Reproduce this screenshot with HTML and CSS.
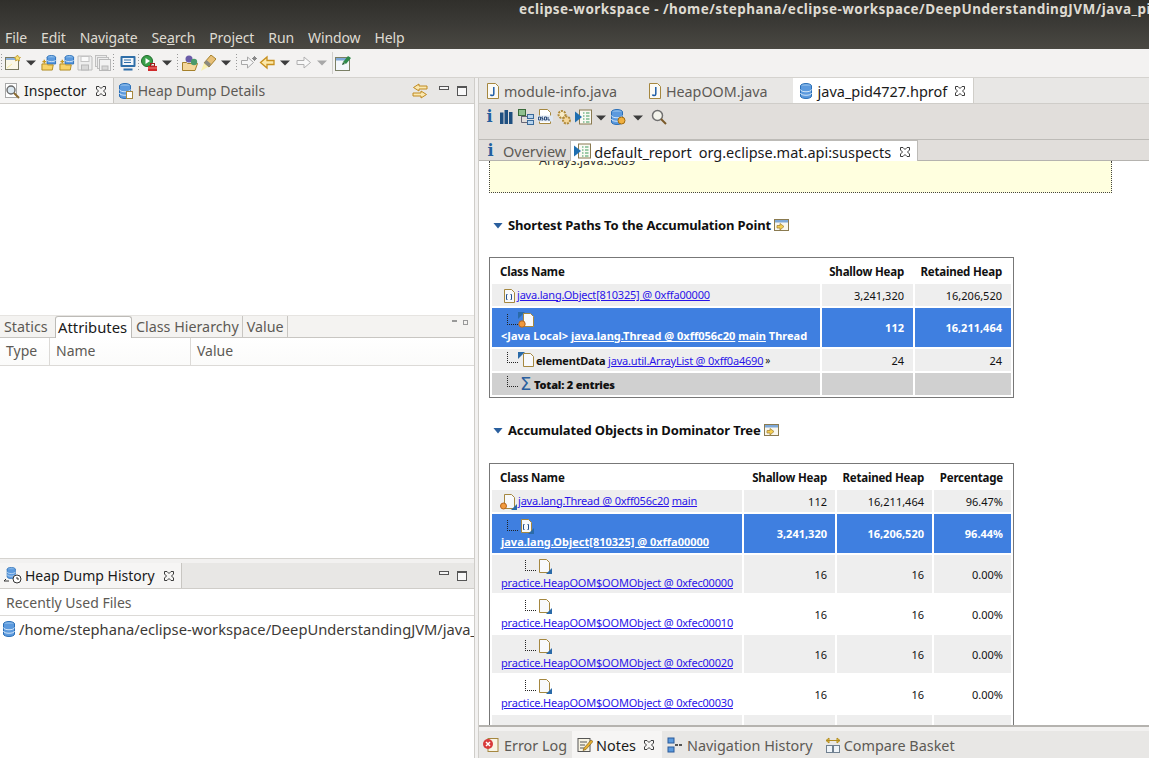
FILE: index.html
```html
<!DOCTYPE html>
<html lang="en">
<head>
<meta charset="utf-8">
<title>eclipse-workspace</title>
<link rel="stylesheet" href="styles.css">
</head>
<body>
<svg class="defs" width="0" height="0">
  <defs>
    <symbol id="obj" viewBox="0 0 16 16"><path d="M3.500 1.500h7l3 3v10h-10z" fill="#f8f9fb" stroke="#a5873f"/><path d="M10 16h6v-6z" fill="#2a6aa8"/></symbol>
    <symbol id="arr" viewBox="0 0 16 16"><path d="M3.500 1.500h7l3 3v10h-10z" fill="#f8f9fb" stroke="#a5873f"/><path d="M6.500 6.500h-1v5h1M9.500 6.500h1v5h-1" fill="none" stroke="#1f4f8f"/></symbol>
    <symbol id="arrb" viewBox="0 0 16 16"><path d="M3.500 1.500h7l3 3v10h-10z" fill="#f8f9fb" stroke="#a5873f"/><path d="M6.500 6.500h-1v5h1M9.500 6.500h1v5h-1" fill="none" stroke="#1f4f8f"/><path d="M10 16h6v-6z" fill="#2a6aa8"/></symbol>
    <symbol id="ref" viewBox="0 0 18 16"><path d="M0 0h7l-7 7z" fill="#2a6aa8"/><path d="M5.500 1.500h7l3 3v10h-10z" fill="#f8f9fb" stroke="#a5873f"/></symbol>
    <symbol id="thr" viewBox="0 0 18 16"><path d="M0 0h7l-7 7z" fill="#2a6aa8"/><path d="M5.500 1.500h7l3 3v10h-10z" fill="#f8f9fb" stroke="#a5873f"/><circle cx="4" cy="12" r="3.200" fill="#f19a3e" stroke="#b8651c"/></symbol>
    <symbol id="thrb" viewBox="0 0 18 16"><path d="M4.500 .5h7l3 3v11h-10z" fill="#f8f9fb" stroke="#a5873f"/><circle cx="3.500" cy="12" r="3" fill="#f19a3e" stroke="#b8651c"/><path d="M11 16h6v-6z" fill="#2a6aa8"/></symbol>
    <symbol id="db" viewBox="0 0 16 16"><ellipse cx="7" cy="3" rx="5.500" ry="2.500" fill="#7fb2e6" stroke="#2a6fb8"/><path d="M1.500 3v10c0 3.300 11 3.300 11 0V3" fill="#5c9ade" stroke="#2a6fb8"/><path d="M1.500 6.500c0 3 11 3 11 0M1.500 10c0 3 11 3 11 0" fill="none" stroke="#d4e6f8"/></symbol>
    <symbol id="java" viewBox="0 0 16 16"><path d="M2.500 .5h8l3 3v12h-11z" fill="#fbfaf5" stroke="#a5873f"/><path d="M8.800 4v7c0 2-3 2-3.300.5" fill="none" stroke="#1f5ea8" stroke-width="1.500"/></symbol>
    <symbol id="report" viewBox="0 0 17 16"><rect x="4.500" y=".5" width="12" height="14" fill="#fafaf4" stroke="#8a7a50"/><path d="M8 3.500h1.500M11 3.500h3.500M8 6.500h1.500M11 6.500h3.500M8 9.500h1.500M11 9.500h3.500M8 12.500h1.500M11 12.500h3.500" stroke="#3c9a5c"/><path d="M0 2l7 5.500L0 13z" fill="#1f6fb0"/></symbol>
    <symbol id="link" viewBox="0 0 16 16"><rect x=".5" y="2.500" width="14" height="11" fill="#f9f7ee" stroke="#8a7a50"/><rect x="1" y="3" width="13" height="2.500" fill="#7ea8d8"/><path d="M3 8.500h3V6.500l4 3-4 3.500v-2H3z" fill="#f5cf50" stroke="#a5873f" stroke-width=".8"/></symbol>
    <symbol id="close" viewBox="0 0 12 12"><path d="M1.500 1.500h2.500l2 2 2-2h2.500v2.500l-2 2 2 2v2.500H8l-2-2-2 2H1.500V8l2-2-2-2z" fill="none" stroke="#3b3b3b"/></symbol>
    <symbol id="drop" viewBox="0 0 10 6"><path d="M0 .5h10L5 5.500z" fill="#3c3c3c"/></symbol>
    <symbol id="dropg" viewBox="0 0 10 6"><path d="M0 .5h10L5 5.500z" fill="#a8a8a8"/></symbol>
    <symbol id="folderdb" viewBox="0 0 16 17"><ellipse cx="10.500" cy="2.500" rx="4.500" ry="2" fill="#8fc0ee" stroke="#2a6fb8"/><path d="M6 2.500v7h9v-7" fill="#5c9ade" stroke="#2a6fb8"/><path d="M6 5.500c0 2 9 2 9 0" fill="none" stroke="#d4e6f8"/><path d="M.5 9.500h5l1 1h6l-1 5.500H.5z" fill="#f8d368" stroke="#b08a20"/><path d="M3 5v4M1 7h4" stroke="#c89a20" stroke-width="1.500"/></symbol>
    <symbol id="disk" viewBox="0 0 16 16"><path d="M1 1h13l1 1v13H1z" fill="#eeeeee" stroke="#bcbcbc"/><rect x="4" y="1.500" width="8" height="5" fill="#fafafa" stroke="#c4c4c4"/><rect x="4.500" y="10" width="7" height="5" fill="#d8d8d8" stroke="#b8b8b8"/></symbol>
    <symbol id="disks" viewBox="0 0 16 16"><rect x=".5" y=".5" width="11" height="11" fill="#ececec" stroke="#c0c0c0"/><rect x="2.500" y="2.500" width="11" height="11" fill="#eeeeee" stroke="#c0c0c0"/><rect x="4.500" y="4.500" width="11" height="11" fill="#f2f2f2" stroke="#b8b8b8"/><rect x="7" y="11" width="6" height="4" fill="#d8d8d8" stroke="#b8b8b8"/></symbol>
  </defs>
</svg>

<div class="app">
  <header class="titlebar"><span class="title">eclipse-workspace - /home/stephana/eclipse-workspace/DeepUnderstandingJVM/java_pid4727.hprof - Eclipse IDE</span></header>
  <nav class="menubar">
    <span>File</span><span>Edit</span><span>Navigate</span><span>Se<u>a</u>rch</span><span>Project</span><span>Run</span><span>Window</span><span>Help</span>
  </nav>
  <div class="toolbar">
    <i class="sep handle"></i>
    <svg class="i16" viewBox="0 0 16 16"><rect x=".5" y="2.500" width="13" height="12" fill="#fbf8e8" stroke="#7a7a60"/><rect x="1" y="3" width="12" height="2" fill="#8ab0dc"/><path d="M2 13l5-4" stroke="#f4e8a0"/><path d="M12.500 0l1 2 2 .5-1.500 1.500.5 2-2-1-2 1 .5-2L9 2.500l2-.5z" fill="#f8e070" stroke="#b89020" stroke-width=".7"/></svg>
    <svg class="drop"><use href="#drop"/></svg>
    <svg class="i16"><use href="#folderdb"/></svg>
    <svg class="i16"><use href="#folderdb"/></svg>
    <svg class="i16"><use href="#disk"/></svg>
    <svg class="i16"><use href="#disks"/></svg>
    <i class="sep"></i>
    <svg class="i16 g4" viewBox="0 0 16 16"><rect x=".5" y="1" width="15" height="11" rx="1" fill="#2e6ea8"/><rect x="2.500" y="3" width="11" height="7" fill="#f2f6fa"/><path d="M4 5h7M4 7.500h7" stroke="#2e6ea8"/><path d="M3.500 14.500h9" stroke="#2e6ea8" stroke-width="2"/></svg>
    <i class="sep"></i>
    <svg class="i16" viewBox="0 0 16 16"><circle cx="6" cy="6" r="5.500" fill="#3aa04a" stroke="#1f6a2a"/><path d="M4.500 3l4.500 3-4.500 3z" fill="#fff"/><rect x="7" y="11" width="9" height="5" fill="#d02a2a"/><rect x="9.500" y="8.500" width="4" height="2.500" fill="none" stroke="#a01a1a"/><path d="M7 13h9" stroke="#f08080"/></svg>
    <svg class="drop"><use href="#drop"/></svg>
    <i class="sep"></i>
    <svg class="i16 g2" viewBox="0 0 16 16"><path d="M.5 7.500h4l1 1h10l-2.500 7H.5z" fill="#f5d79a" stroke="#a5802a"/><circle cx="7" cy="4" r="3.500" fill="#6a5ca8"/><circle cx="12" cy="7" r="3.200" fill="#4a9a6a"/></svg>
    <svg class="i16" viewBox="0 0 16 16"><path d="M11 0l5 4-7 8-5-4z" fill="#e8c078" stroke="#a5802a"/><path d="M6.500 5l4.500 4-2 3-5-4z" fill="#8a8a80"/><path d="M4 8l4 4-7 4z" fill="#f8f0b0"/></svg>
    <svg class="drop"><use href="#drop"/></svg>
    <i class="sep"></i>
    <svg class="i16 g2" viewBox="0 0 16 16"><path d="M.5 5.500h6V2l6 5.500-6 5.500V9.500h-6z" fill="#f6f6f6" stroke="#a8a8a8"/><path d="M13.500 1v5M11 3.500h5M12 2l3 3M15 2l-3 3" stroke="#8a8a8a"/></svg>
    <svg class="i16" viewBox="0 0 16 16"><path d="M15 5.500H8V2L1.500 7.500 8 13V9.500h7z" fill="#fce8a8" stroke="#c8901e" stroke-width="1.300"/></svg>
    <svg class="drop"><use href="#drop"/></svg>
    <svg class="i16 g1" viewBox="0 0 16 16"><path d="M1 5.500h7V2l6.500 5.500L8 13V9.500H1z" fill="#f8f8f8" stroke="#b0b0b0"/></svg>
    <svg class="drop"><use href="#dropg"/></svg>
    <i class="sep solid"></i>
    <svg class="i16" viewBox="0 0 16 16"><rect x=".5" y="2.500" width="14" height="13" fill="#f4f7fb" stroke="#7a7f65"/><rect x="1" y="3" width="13" height="2.500" fill="#7ea8d8"/><path d="M8 7l5-6 3 2-5 6z" fill="#2e8a4a"/><path d="M8 7l-1 3 3-1z" fill="#1f5a30"/></svg>
  </div>

  <div class="workbench">
    <aside class="left">
      <section class="pane top">
        <div class="tabbar">
          <div class="tab active first">
            <svg class="i16" viewBox="0 0 16 16"><rect x="1.500" y=".5" width="11" height="14" fill="#fff" stroke="#a8a8a8"/><circle cx="7" cy="7" r="4" fill="#dce8f0" stroke="#6a6a6a" stroke-width="1.400"/><path d="M10 10l5 5" stroke="#8a6a30" stroke-width="2"/></svg>
            <span>Inspector</span><svg class="x"><use href="#close"/></svg>
          </div>
          <div class="tab">
            <svg class="i16" viewBox="0 0 16 16"><use href="#db"/><rect x="8.500" y="8.500" width="6" height="7" fill="#fff" stroke="#a5873f"/></svg>
            <span>Heap Dump Details</span>
          </div>
          <div class="tabtools">
            <svg class="i16" viewBox="0 0 16 16"><path d="M7 1L1.500 4.500 7 8V6h8V3H7zM9 8l5.500 3.500L9 15v-2H1v-3h8z" fill="#fae8b0" stroke="#c08a20"/></svg>
            <i class="min"></i><i class="max"></i>
          </div>
        </div>
      </section>
      <section class="pane mid">
        <div class="smalltabs">
          <div class="stab">Statics</div><div class="stab on">Attributes</div><div class="stab">Class Hierarchy</div><div class="stab">Value</div>
          <div class="tinytools"><i class="tmin"></i><i class="tmax"></i></div>
        </div>
        <div class="colhead">
          <div class="ch type">Type</div><div class="ch name">Name</div><div class="ch val">Value</div>
        </div>
      </section>
      <section class="pane hist">
        <div class="tabbar">
          <div class="tab active first">
            <svg class="i18" viewBox="0 0 18 18"><use href="#db" width="12" height="12" x="2" y="0"/><circle cx="13" cy="12" r="4" fill="#fff" stroke="#333"/><path d="M13 10v2h2M0 14h5M0 14l2-2" stroke="#333" fill="none"/></svg>
            <span>Heap Dump History</span><svg class="x"><use href="#close"/></svg>
          </div>
          <div class="tabtools"><i class="min"></i><i class="max"></i></div>
        </div>
        <div class="recent">Recently Used Files</div>
        <div class="file">
          <svg class="i16" viewBox="0 0 16 16"><use href="#db"/></svg>
          <span>/home/stephana/eclipse-workspace/DeepUnderstandingJVM/java_pid4727.hprof</span>
        </div>
      </section>
    </aside>

    <main class="right">
      <div class="edtabs">
        <div class="etab"><svg class="i16" viewBox="0 0 16 16"><use href="#java"/></svg><span>module-info.java</span></div>
        <div class="etab"><svg class="i16" viewBox="0 0 16 16"><use href="#java"/></svg><span>HeapOOM.java</span></div>
        <div class="etab active"><svg class="i16" viewBox="0 0 16 16"><use href="#db"/></svg><span>java_pid4727.hprof</span><svg class="x"><use href="#close"/></svg></div>
      </div>
      <div class="edtools">
        <span class="info">i</span>
        <svg class="i16 bars" viewBox="0 0 16 16"><path d="M2 3.500h3.500V15H2zM6.500 1h3.500v14H6.500zM11 3h3.500v12H11z" fill="#1f4f80"/></svg>
        <svg class="i16" viewBox="0 0 16 16"><rect x=".5" y=".5" width="7" height="6" fill="#8fc08f" stroke="#3a6a3a"/><rect x="9.500" y="5.500" width="6" height="4" fill="#b8d4ee" stroke="#3a6a9a"/><rect x="9.500" y="11.500" width="6" height="4" fill="#b8d4ee" stroke="#3a6a9a"/><path d="M3.500 6.500v7h6M3.500 7.500h6" stroke="#667" fill="none"/></svg>
        <svg class="i16" viewBox="0 0 16 16"><path d="M2.500 .5h8l3 3v11h-11z" fill="#fff" stroke="#a5873f"/><rect x="0" y="6.500" width="16" height="6" fill="#dfe8f2"/><path d="M1.500 8v3h2V8zM6 8H4.800v1.500H6V11H4.500M7.500 8v3h2V8zM11 8v3h2" fill="none" stroke="#1f3f6f" stroke-width=".9"/></svg>
        <svg class="i16" viewBox="0 0 16 16"><circle cx="6" cy="5.500" r="3.500" fill="#f8ecc8" stroke="#b08a3a" stroke-width="2" stroke-dasharray="2 1"/><circle cx="10.500" cy="11" r="3.500" fill="#f5d79a" stroke="#b08a3a" stroke-width="2" stroke-dasharray="2 1"/></svg>
        <svg class="i17"><use href="#report"/></svg>
        <svg class="drop"><use href="#drop"/></svg>
        <svg class="i16" viewBox="0 0 16 16"><use href="#db"/><circle cx="11.500" cy="11.500" r="3.500" fill="#f0b040" stroke="#a06a10"/></svg>
        <svg class="drop wide"><use href="#drop"/></svg>
        <svg class="i16" viewBox="0 0 16 16"><circle cx="6.500" cy="6.500" r="5" fill="#f4f4ec" stroke="#707070" stroke-width="1.500"/><path d="M10 10l5 5" stroke="#7a5a2a" stroke-width="2"/></svg>
      </div>
      <div class="subtabs">
        <div class="sub"><span class="info small">i</span><span>Overview</span></div>
        <div class="sub active"><svg class="i17"><use href="#report"/></svg><span class="gap">default_report</span><span>org.eclipse.mat.api:suspects</span><svg class="x"><use href="#close"/></svg></div>
      </div>
      <div class="report">
        <div class="note"><span class="notetext">Arrays.java:3689</span></div>

        <h3 class="heading"><i class="tri"></i>Shortest Paths To the Accumulation Point<svg class="i16" viewBox="0 0 16 16"><use href="#link"/></svg></h3>
        <table class="grid first-grid">
          <thead><tr><th class="c-name">Class Name</th><th class="num c-sh">Shallow Heap</th><th class="num c-rt">Retained Heap</th></tr></thead>
          <tbody>
            <tr class="odd r1">
              <td><svg class="ico"><use href="#arr"/></svg><a>java.lang.Object[810325] @ 0xffa00000</a></td>
              <td class="num">3,241,320</td><td class="num">16,206,520</td>
            </tr>
            <tr class="sel">
              <td><div class="tree t1"><i class="conn"></i><svg class="ico18"><use href="#thr"/></svg></div><div class="sub2">&lt;Java Local&gt; <a>java.lang.Thread @ 0xff056c20</a> <a>main</a> Thread</div></td>
              <td class="num">112</td><td class="num">16,211,464</td>
            </tr>
            <tr class="odd r1">
              <td class="inl"><div class="tree t1"><i class="conn"></i><svg class="ico18"><use href="#ref"/></svg><b>elementData</b>&nbsp;<a>java.util.ArrayList @ 0xff0a4690</a> <span class="more">»</span></div></td>
              <td class="num">24</td><td class="num">24</td>
            </tr>
            <tr class="total r1">
              <td class="inl"><div class="tree t1"><i class="conn"></i><span class="sigma">Σ</span><b>Total: 2 entries</b></div></td>
              <td></td><td></td>
            </tr>
          </tbody>
        </table>

        <h3 class="heading second"><i class="tri"></i>Accumulated Objects in Dominator Tree<svg class="i16" viewBox="0 0 16 16"><use href="#link"/></svg></h3>
        <table class="grid second-grid">
          <thead><tr><th class="d-name">Class Name</th><th class="num d-sh">Shallow Heap</th><th class="num d-rt">Retained Heap</th><th class="num d-pc">Percentage</th></tr></thead>
          <tbody>
            <tr class="odd r1">
              <td><svg class="ico18 lead"><use href="#thrb"/></svg><a>java.lang.Thread @ 0xff056c20</a> <a>main</a></td>
              <td class="num">112</td><td class="num">16,211,464</td><td class="num">96.47%</td>
            </tr>
            <tr class="sel">
              <td><div class="tree t1"><i class="conn"></i><svg class="ico"><use href="#arrb"/></svg></div><div class="sub2"><a>java.lang.Object[810325] @ 0xffa00000</a></div></td>
              <td class="num">3,241,320</td><td class="num">16,206,520</td><td class="num">96.44%</td>
            </tr>
            <tr class="odd r2">
              <td><div class="tree t2"><i class="conn"></i><svg class="ico"><use href="#obj"/></svg></div><div class="sub2"><a>practice.HeapOOM$OOMObject @ 0xfec00000</a></div></td>
              <td class="num">16</td><td class="num">16</td><td class="num">0.00%</td>
            </tr>
            <tr class="even r2">
              <td><div class="tree t2"><i class="conn"></i><svg class="ico"><use href="#obj"/></svg></div><div class="sub2"><a>practice.HeapOOM$OOMObject @ 0xfec00010</a></div></td>
              <td class="num">16</td><td class="num">16</td><td class="num">0.00%</td>
            </tr>
            <tr class="odd r2">
              <td><div class="tree t2"><i class="conn"></i><svg class="ico"><use href="#obj"/></svg></div><div class="sub2"><a>practice.HeapOOM$OOMObject @ 0xfec00020</a></div></td>
              <td class="num">16</td><td class="num">16</td><td class="num">0.00%</td>
            </tr>
            <tr class="even r2">
              <td><div class="tree t2"><i class="conn"></i><svg class="ico"><use href="#obj"/></svg></div><div class="sub2"><a>practice.HeapOOM$OOMObject @ 0xfec00030</a></div></td>
              <td class="num">16</td><td class="num">16</td><td class="num">0.00%</td>
            </tr>
            <tr class="odd r2">
              <td><div class="tree t2"><i class="conn"></i><svg class="ico"><use href="#obj"/></svg></div></td>
              <td></td><td></td><td></td>
            </tr>
          </tbody>
        </table>
      </div>
      <div class="bottomtabs">
        <div class="btab err"><svg class="i16" viewBox="0 0 16 16"><rect x="5" y="1.500" width="10" height="13" fill="#f8f4e4" stroke="#a5873f"/><circle cx="5" cy="7" r="5" fill="#d83a3a"/><path d="M3 5l4 4M7 5l-4 4" stroke="#fff" stroke-width="1.500"/></svg><span>Error Log</span></div>
        <div class="btab active"><svg class="i16" viewBox="0 0 16 16"><rect x="1" y="1.500" width="12" height="13" fill="#f8f4e4" stroke="#555"/><path d="M3 5h7M3 8h5M3 11h4" stroke="#555"/><path d="M7 11l7-8 2 1.500-7 8-3 1z" fill="#e8b030" stroke="#705010" stroke-width=".6"/></svg><span>Notes</span><svg class="x"><use href="#close"/></svg></div>
        <div class="btab nav"><svg class="i16" viewBox="0 0 16 16"><rect x="1" y="1" width="6" height="5" fill="#5a9ade" stroke="#2a5a9a"/><rect x="1" y="10" width="6" height="5" fill="#5a9ade" stroke="#2a5a9a"/><path d="M8 8h7" stroke="#555" stroke-width="2" stroke-dasharray="3 1"/></svg><span>Navigation History</span></div>
        <div class="btab cmp"><svg class="i16" viewBox="0 0 16 16"><path d="M1 3.500h14M1 3.500l3-2.500v5zM15 3.500l-3-2.500v5z" fill="#f5d040" stroke="#b08a20"/><rect x="1.500" y="8.500" width="6" height="7" fill="#eef3f8" stroke="#708090"/><rect x="8.500" y="8.500" width="6" height="7" fill="#eef3f8" stroke="#708090"/></svg><span>Compare Basket</span></div>
      </div>
    </main>
  </div>
</div>
</body>
</html>
```
FILE: styles.css
```css
* { box-sizing: border-box; }
html, body { margin: 0; padding: 0; height: 100%; overflow: hidden; }
body { font-family: "Noto Sans", sans-serif; font-size: 14px; color: #3c3c3c; background: #f2f1f0; }
.defs { position: absolute; }
svg { display: block; flex: none; }
.app { width: 1149px; height: 758px; display: flex; flex-direction: column; overflow: hidden; }

.titlebar { height: 25px; flex: none; background: linear-gradient(#302f2b, #3c3b37); padding-left: 519px; overflow: hidden; white-space: nowrap; font-size: 13.500px; font-weight: 700; line-height: 19px; color: #dfdbd2; letter-spacing: .45px; }
.menubar { height: 24px; flex: none; background: linear-gradient(#3c3b37, #4a4842); display: flex; gap: 14px; padding-left: 5px; color: #dfdbd2; font-size: 14px; line-height: 25px; letter-spacing: -.1px; }
.menubar u { text-decoration-thickness: 1px; }

.toolbar { height: 28px; flex: none; display: flex; align-items: center; gap: 2px; padding-left: 1px; background: #f3f2f1; }
.i16 { width: 16px; height: 16px; }
.i17 { width: 17px; height: 17px; }
.i18 { width: 18px; height: 18px; }
.drop { width: 10px; height: 6px; margin: 0 3px; }
.g1 { margin-left: 1px; }
.g2 { margin-left: 2px; }
.g4 { margin-left: 4px; }
.sep { width: 1px; height: 18px; background: repeating-linear-gradient(#9a9a9a 0 1px, transparent 1px 3px); }
.handle { margin-right: 1px; }
.solid { background: #d0cfcc; height: 22px; }

.workbench { flex: 1; display: flex; min-height: 0; border-top: 1px solid #d5d3cf; }
.left { width: 475px; flex: none; display: flex; flex-direction: column; border-right: 1px solid #cfcdc9; }
.pane { background: #fff; display: flex; flex-direction: column; }
.pane.top { height: 237px; }
.pane.mid { height: 244px; border-top: 1px solid #e6e4e1; border-bottom: 1px solid #d5d3cf; }
.pane.hist { flex: 1; border-top: 4px solid #f2f1f0; }

.tabbar { height: 26px; flex: none; display: flex; background: #e8e7e5; border-bottom: 1px solid #cfcdc9; }
.tab { display: flex; align-items: center; gap: 4px; padding: 0 3px 0 4px; color: #5d5a55; height: 25px; font-size: 14px; white-space: nowrap; }
.tab.active { background: #f6f5f4; color: #1a1a1a; border-right: 1px solid #c8c6c2; }
.tab.first { padding-left: 4px; padding-right: 6px; }
.tab .i18 { margin-right: -1px; }
.x { width: 12px; height: 12px; margin-left: 4px; }
.tabtools { margin-left: auto; display: flex; align-items: center; gap: 8px; padding-right: 7px; }
.min { width: 10px; height: 4px; border: 1px solid #555; margin-top: -6px; background: #f4f4f4; display: block; margin-left: 3px; }
.max { width: 10px; height: 10px; border: 1px solid #555; border-top-width: 2px; background: #f8f8f8; display: block; }

.smalltabs { height: 22px; flex: none; display: flex; background: #f4f3f1; border-bottom: 1px solid #c8c6c2; font-size: 14.300px; color: #5d5a55; line-height: 21px; }
.stab { padding: 0 3px 0 4px; border-right: 1px solid #c8c6c2; white-space: nowrap; }
.stab:first-child { width: 55px; padding-right: 0; border-right: 0; }
.stab.on { background: #fff; color: #1a1a1a; border: 1px solid #bdbbb7; border-bottom: 0; border-radius: 3px 3px 0 0; line-height: 20px; height: 22px; width: 77px; padding: 0 2px; font-size: 14.800px; }
.tinytools { margin-left: auto; display: flex; gap: 6px; padding: 3px 6px 0 0; }
.tmin { width: 5px; height: 2px; border: 1px solid #999; display: block; margin-top: 1px; }
.tmax { width: 5px; height: 5px; border: 1px solid #999; display: block; margin-top: 1px; }

.colhead { height: 28px; flex: none; display: flex; border-bottom: 1px solid #dcdad7; font-size: 14px; line-height: 26px; color: #5d5a55; background: linear-gradient(#fff, #fbfbfa); }
.ch { padding-left: 6px; border-right: 1px solid #dcdad7; }
.ch.type { width: 50px; }
.ch.name { width: 141px; }
.ch.val { flex: 1; border-right: 0; }

.recent { height: 27px; flex: none; padding-left: 6px; line-height: 28px; border-bottom: 1px solid #dcdad7; color: #5d5a55; font-size: 14px; }
.file { display: flex; align-items: center; gap: 1px; padding: 3px 2px 0 2px; overflow: hidden; white-space: nowrap; font-size: 14.700px; color: #3d3a36; }

.right { flex: 1; min-width: 0; display: flex; flex-direction: column; margin-left: 3px; background: #fff; border-left: 1px solid #cfcdc9; }
.edtabs { height: 25px; flex: none; display: flex; background: #e8e7e5; padding-left: 6px; }
.etab { display: flex; align-items: center; gap: 3px; font-size: 14.300px; color: #5d5a55; padding: 1px 30px 0 0; white-space: nowrap; }
.etab.active { background: #fff; color: #1a1a1a; padding: 1px 7px 0 6px; margin-left: -5px; gap: 3px; border-right: 1px solid #d0cec9; font-size: 14.500px; }
.edtools { height: 37px; flex: none; display: flex; gap: 3px; align-items: flex-start; padding: 5px 0 0 7px; background: #e1dedb; border-top: 1px solid #cfcdc9; border-bottom: 1px solid #bdbbb7; }
.edtools .drop { margin: 6px 1px 0; }
.edtools .drop.wide { margin: 6px 5px 0 4px; }
.bars { margin-left: 2px; margin-right: 1px; }
.info { width: 7px; font-family: "DejaVu Serif", serif; font-weight: 700; color: #22609e; font-size: 16px; line-height: 16px; text-align: center; }
.info.small { margin-right: 9px; margin-left: 8px; }
.subtabs { height: 21px; flex: none; display: flex; background: #e1dedb; border-bottom: 1px solid #b5b3af; font-size: 14.500px; color: #5d5a55; position: relative; z-index: 2; }
.sub { display: flex; align-items: center; white-space: nowrap; padding-top: 1px; }
.sub.active { background: #fff; color: #1a1a1a; border: 1px solid #bdbbb7; border-bottom: 0; height: 21px; padding: 1px 6px 0 3px; margin-left: 4px; }
.sub.active .x { margin-left: 8px; }
.gap { margin: 0 7px 0 3px; }

.report { flex: 1; min-height: 0; overflow: hidden; background: #fff; padding-left: 10px; color: #111; }
.note { width: 623px; height: 32px; background: #ffffdf; border: 1px dotted #444; border-top: 0; position: relative; overflow: hidden; }
.notetext { position: absolute; left: 49px; top: -7px; font-size: 12.500px; line-height: 14px; color: #333; white-space: nowrap; }
.heading { margin: 24px 0 0; height: 16px; display: flex; align-items: center; gap: 3px; font-size: 13px; line-height: 16px; font-weight: 700; color: #101010; letter-spacing: -.15px; }
.heading.second { margin-top: 24px; }
.tri { width: 10px; height: 6px; margin: 1px 2px 0 4px; display: block; background: #2a5f9e; clip-path: polygon(0 0, 100% 0, 50% 100%); }

.grid { margin-top: 24px; border: 1px solid #777; border-collapse: separate; border-spacing: 2px; table-layout: fixed; font-size: 11px; background: #fff; width: 525px; }
.second-grid { margin-top: 25px; }
.c-name { width: 328px; }
.c-sh { width: 91px; }
.c-rt { width: 96px; }
.d-name { width: 250px; }
.d-sh { width: 91px; }
.d-rt { width: 95px; }
.d-pc { width: 77px; }
th { height: 22px; padding: 0 9px 0 8px; text-align: left; font-weight: 700; font-size: 11.500px; color: #111; white-space: nowrap; letter-spacing: -.2px; }
th.num { padding-left: 0; padding-right: 9px; }
.second-grid th.num, .second-grid td.num { padding-right: 8px; }
td { padding: 0 9px 0 8px; }
.num { text-align: right; }
.r1 td { height: 22px; }
.r2 td { height: 38px; }
.sel td { height: 39px; background: #3f7fe0; color: #fff; font-weight: 700; }
.sel a { color: #fff; }
.sel .sub2 { margin-top: 0; }
.odd td { background: #eeeeee; }
.even td { background: #fff; }
.total td { background: #d0d0d0; font-weight: 700; }
td:first-child { padding-left: 9px; padding-right: 2px; white-space: nowrap; overflow: hidden; letter-spacing: -.2px; }
.sel td:first-child { letter-spacing: 0; }
td a { color: #2a14e8; text-decoration: underline; }
.ico { width: 16px; height: 16px; display: inline-block; vertical-align: -5px; }
.ico18 { width: 18px; height: 16px; display: inline-block; vertical-align: -5px; }
.lead { margin-left: -1px; margin-right: 0; }
.tree { display: flex; align-items: flex-end; height: 16px; }
.t1 { padding-left: 6px; }
.t2 { padding-left: 24px; }
.conn { width: 11px; height: 11px; border-left: 1px dotted #222; border-bottom: 1px dotted #222; display: block; margin-bottom: 3px; }
.sub2 { line-height: 15px; margin-top: 1px; }
.inl .tree { align-items: center; }
.inl .conn { margin-bottom: 6px; }
.inl b { font-size: 11px; color: #111; }
.sigma { width: 15px; font-family: "DejaVu Sans", sans-serif; font-weight: 400; font-size: 18px; line-height: 16px; text-align: center; color: #2a5f9e; margin-right: 1px; }
.more { font-size: 10px; margin-left: 2px; }

.bottomtabs { height: 33px; flex: none; position: relative; display: flex; align-items: flex-end; background: linear-gradient(#f2f1f0 4px, #e8e7e5 4px); border-top: 2px solid #b5b3af; font-size: 14.400px; color: #5d5a55; }
.btab { height: 27px; display: flex; align-items: center; gap: 3px; white-space: nowrap; padding: 1px 4px 0; }
.btab.err { padding: 1px 5px 0 4px; gap: 5px; }
.btab.active { background: #f6f5f4; color: #1a1a1a; padding: 1px 7px 0 5px; margin: 0 3px 0 0; }
.btab.nav { padding: 1px 0 0 2px; margin-right: 8px; gap: 4px; }
```
